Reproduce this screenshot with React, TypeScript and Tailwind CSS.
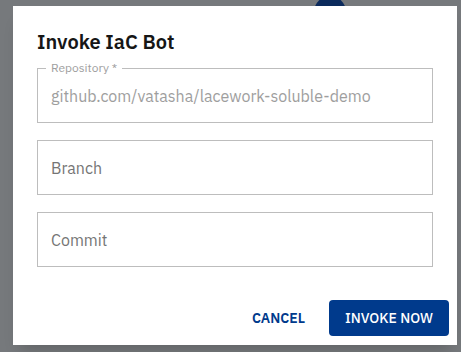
import React from "react";

const font = { fontFamily: '"IBM Plex Sans", Roboto, "Liberation Sans", sans-serif' };

function Field({ label }: { label: string }) {
  return (
    <div className="h-[55px] w-full border border-[#bdbdbd] flex items-center px-[13px]">
      <span className="text-[16px] text-[#757575]">{label}</span>
    </div>
  );
}

export default function App() {
  return (
    <div className="relative w-[461px] h-[352px] bg-[#76797c] overflow-hidden" style={font}>
      <div className="absolute left-[314px] top-[-4px] w-[32px] h-[32px] rounded-full bg-[#0b2a5c]" />
      <div className="relative ml-[13px] pt-[6px]">
        <div className="w-[444px] h-[339px] bg-white flex flex-col shadow-[0_11px_15px_-7px_rgba(0,0,0,0.2)]">
          <div className="px-6 pt-[22px]">
            <h2 className="text-[20px] leading-[28px] font-semibold text-[#161616]">Invoke IaC Bot</h2>
          </div>
          <div className="px-6 mt-[12px] flex flex-col gap-[17px]">
            <div className="relative h-[55px] w-full border border-[#bdbdbd] flex items-center px-[13px]">
              <span className="absolute left-[8px] top-[-9px] px-[5px] bg-white text-[12px] leading-[16px] text-[#9e9e9e]">
                Repository *
              </span>
              <span className="text-[16px] text-[#9e9e9e]">github.com/vatasha/lacework-soluble-demo</span>
            </div>
            <Field label="Branch" />
            <Field label="Commit" />
          </div>
          <div className="mt-auto flex justify-end items-center gap-4 pr-2 pb-[9px]">
            <button className="h-[36px] px-2 text-[14px] font-semibold text-[#003a8c] uppercase">
              Cancel
            </button>
            <button className="h-[36px] w-[120px] rounded-[4px] bg-[#003a8c] text-white text-[14px] font-medium uppercase">
              Invoke Now
            </button>
          </div>
        </div>
      </div>
    </div>
  );
}
